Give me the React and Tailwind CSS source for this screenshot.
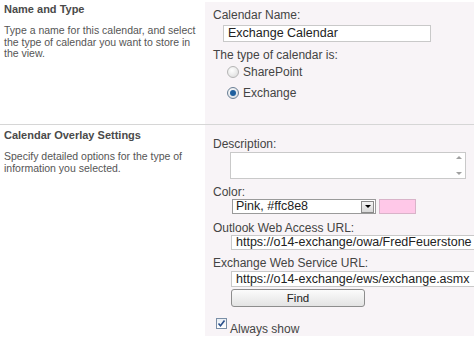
import React from 'react'

const panel = 'bg-[#f8f4f7]'
const label = 'text-[12px] leading-[14px] text-[#444]'
const inputBox = 'bg-white border border-[#c9c9c9] text-[12.5px] text-[#222] px-[4px] overflow-hidden whitespace-nowrap'

function Radio({ checked, children, className }) {
  return (
    <div className={`flex items-center h-[14px] pl-[14px] ${className}`}>
      <span
        className={`w-[12px] h-[12px] rounded-full border ${
          checked ? 'border-[#6a7f95] bg-[radial-gradient(circle_at_40%_35%,#ffffff,#cfd6de)]' : 'border-[#b5b5b5] bg-[radial-gradient(circle_at_40%_35%,#ffffff,#d8d8d8)]'
        } flex items-center justify-center`}
      >
        {checked && <span className="w-[6px] h-[6px] rounded-full bg-[#1f5f9e]" />}
      </span>
      <span className={`${label} ml-[4px]`}>{children}</span>
    </div>
  )
}

function Section({ title, lines, children, leftPad, rightClass }) {
  return (
    <div className="flex">
      <div className={`w-[205px] shrink-0 pl-[4px] ${leftPad}`}>
        <div className="text-[11px] leading-[14px] font-bold text-[#4a4a4a]">{title}</div>
        <div className="mt-[9px] text-[10.5px] leading-[11.5px] text-[#555]">
          {lines.map((l) => (
            <div key={l} className="whitespace-nowrap">{l}</div>
          ))}
        </div>
      </div>
      <div className={`flex-1 min-w-0 overflow-hidden ${panel} pl-[8px] ${rightClass}`}>{children}</div>
    </div>
  )
}

export default function App() {
  return (
    <div className="w-[474px] h-[339px] bg-white overflow-hidden" style={{ fontFamily: '"Liberation Sans", Arial, sans-serif' }}>
      <Section
        title="Name and Type"
        lines={['Type a name for this calendar, and select', 'the type of calendar you want to store in', 'the view.']}
        leftPad="pt-[2px]"
        rightClass="mt-[2px] h-[122px] pt-[6px]"
      >
        <div className={label}>Calendar Name:</div>
        <div className={`${inputBox} mt-[3px] ml-[10px] w-[208px] h-[17px] leading-[15px]`}>Exchange Calendar</div>
        <div className={`${label} mt-[6px]`}>The type of calendar is:</div>
        <Radio className="mt-[3px]">SharePoint</Radio>
        <Radio checked className="mt-[7px]">Exchange</Radio>
      </Section>

      <div className="h-px bg-[#d6d6d6]" />

      <Section
        title="Calendar Overlay Settings"
        lines={['Specify detailed options for the type of', 'information you selected.']}
        leftPad="pt-[3px]"
        rightClass="h-[211px] pt-[12px]"
      >
        <div className={label}>Description:</div>
        <div className="mt-[1px] ml-[17px] w-[236px] h-[27px] bg-white border border-[#c9c9c9] flex justify-end">
          <div className="w-[10px] flex flex-col justify-between py-[3px] items-center mr-[1px]">
            <span className="w-0 h-0 border-l-[3px] border-r-[3px] border-b-[3px] border-l-transparent border-r-transparent border-b-[#a0a0a0]" />
            <span className="w-0 h-0 border-l-[3px] border-r-[3px] border-t-[3px] border-l-transparent border-r-transparent border-t-[#a0a0a0]" />
          </div>
        </div>
        <div className={`${label} mt-[6px]`}>Color:</div>
        <div className="flex ml-[19px] h-[15px]">
          <div className="w-[144px] h-[15px] bg-white border border-[#9a9a9a] flex items-center justify-between">
            <span className="text-[12.5px] leading-[13px] text-[#222] pl-[3px]">Pink, #ffc8e8</span>
            <span className="w-[13px] h-[12px] mr-[1px] border border-[#8a8a8a] bg-[linear-gradient(#f4f4f4,#d8d8d8)] flex items-center justify-center">
              <span className="w-0 h-0 border-l-[3px] border-r-[3px] border-t-[3px] border-l-transparent border-r-transparent border-t-black" />
            </span>
          </div>
          <div className="ml-[3px] w-[37px] h-[15px] bg-[#ffc8e8] border border-[#d9b3c9]" />
        </div>
        <div className={`${label} mt-[7px]`}>Outlook Web Access URL:</div>
        <div className={`${inputBox} ml-[18px] w-[270px] h-[15px] leading-[13px]`}>https://o14-exchange/owa/FredFeuerstone</div>
        <div className={`${label} mt-[6px]`}>Exchange Web Service URL:</div>
        <div className={`${inputBox} mt-[1px] ml-[18px] w-[270px] h-[16px] leading-[14px]`}>https://o14-exchange/ews/exchange.asmx</div>
        <button className="mt-[2px] ml-[18px] w-[134px] h-[18px] border border-[#8d8d8d] rounded-[3px] bg-[linear-gradient(#fbfbfb,#e3e3e3)] text-[11.5px] leading-[16px] text-[#222] block">
          Find
        </button>
        <div className="flex mt-[11px] ml-[3px]">
          <span className="w-[11px] h-[11px] border border-[#7a8ea6] bg-[linear-gradient(#e9eef4,#ffffff)] flex items-center justify-center">
            <svg width="9" height="9" viewBox="0 0 9 9">
              <path d="M1.5 4.5 L3.5 6.8 L7.5 1.5" fill="none" stroke="#2a4f8c" strokeWidth="1.6" />
            </svg>
          </span>
          <span className={`${label} mt-[4px] ml-[3px]`}>Always show</span>
        </div>
      </Section>
    </div>
  )
}
